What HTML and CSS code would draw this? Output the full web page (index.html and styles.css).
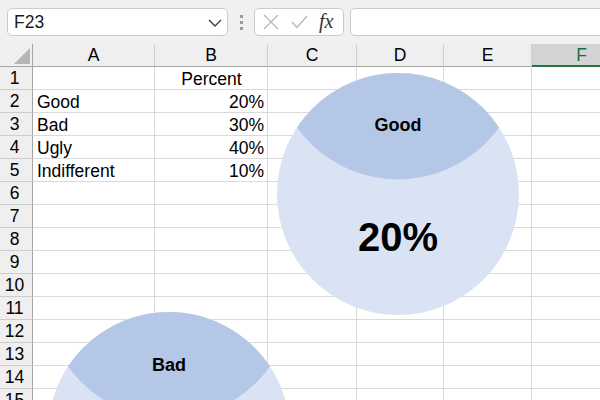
FILE: index.html
```html
<!DOCTYPE html>
<html>
<head>
<meta charset="utf-8">
<link rel="stylesheet" href="styles.css">
</head>
<body>
<div class="app">
  <div class="toolbar">
    <div class="namebox">
      <span class="ref">F23</span>
      <svg class="chev" width="14" height="8" viewBox="0 0 14 8"><polyline points="1,1 7,7 13,1" fill="none" stroke="#3c3c3c" stroke-width="1.4"/></svg>
    </div>
    <div class="grip"><span></span><span></span><span></span></div>
    <div class="fbtns">
      <svg width="16" height="16" viewBox="0 0 16 16"><path d="M1 1 L15 15 M15 1 L1 15" stroke="#b8b8b8" stroke-width="1.3" fill="none"/></svg>
      <svg width="17" height="14" viewBox="0 0 17 14"><polyline points="1,7 6,12.5 16,1" fill="none" stroke="#b8b8b8" stroke-width="1.3"/></svg>
      <span class="fx">fx</span>
    </div>
    <div class="formula"></div>
  </div>
  <div class="sheet">
    <div class="grid">
      <div class="corner"><span class="tri"></span></div>
      <div class="ch">A</div><div class="ch">B</div><div class="ch">C</div><div class="ch">D</div><div class="ch">E</div><div class="ch sel">F</div>

      <div class="rh">1</div><div class="c"></div><div class="c ctr">Percent</div><div class="c"></div><div class="c"></div><div class="c"></div><div class="c"></div>
      <div class="rh">2</div><div class="c">Good</div><div class="c num">20%</div><div class="c"></div><div class="c"></div><div class="c"></div><div class="c"></div>
      <div class="rh">3</div><div class="c">Bad</div><div class="c num">30%</div><div class="c"></div><div class="c"></div><div class="c"></div><div class="c"></div>
      <div class="rh">4</div><div class="c">Ugly</div><div class="c num">40%</div><div class="c"></div><div class="c"></div><div class="c"></div><div class="c"></div>
      <div class="rh">5</div><div class="c">Indifferent</div><div class="c num">10%</div><div class="c"></div><div class="c"></div><div class="c"></div><div class="c"></div>
      <div class="rh">6</div><div class="c"></div><div class="c"></div><div class="c"></div><div class="c"></div><div class="c"></div><div class="c"></div>
      <div class="rh">7</div><div class="c"></div><div class="c"></div><div class="c"></div><div class="c"></div><div class="c"></div><div class="c"></div>
      <div class="rh">8</div><div class="c"></div><div class="c"></div><div class="c"></div><div class="c"></div><div class="c"></div><div class="c"></div>
      <div class="rh">9</div><div class="c"></div><div class="c"></div><div class="c"></div><div class="c"></div><div class="c"></div><div class="c"></div>
      <div class="rh">10</div><div class="c"></div><div class="c"></div><div class="c"></div><div class="c"></div><div class="c"></div><div class="c"></div>
      <div class="rh">11</div><div class="c"></div><div class="c"></div><div class="c"></div><div class="c"></div><div class="c"></div><div class="c"></div>
      <div class="rh">12</div><div class="c"></div><div class="c"></div><div class="c"></div><div class="c"></div><div class="c"></div><div class="c"></div>
      <div class="rh">13</div><div class="c"></div><div class="c"></div><div class="c"></div><div class="c"></div><div class="c"></div><div class="c"></div>
      <div class="rh">14</div><div class="c"></div><div class="c"></div><div class="c"></div><div class="c"></div><div class="c"></div><div class="c"></div>
      <div class="rh">15</div><div class="c"></div><div class="c"></div><div class="c"></div><div class="c"></div><div class="c"></div><div class="c"></div>
    </div>

    <svg class="chart chart-good" width="244" height="244" viewBox="0 0 244 244">
      <defs><clipPath id="capGood"><circle cx="122" cy="-16.5" r="124"/></clipPath></defs>
      <circle cx="122" cy="122" r="121" fill="#dae3f3"/>
      <circle cx="122" cy="122" r="121" fill="#b4c7e7" clip-path="url(#capGood)"/>
      <text class="lbl" x="122" y="59">Good</text>
      <text class="pct" x="122" y="178.5">20%</text>
    </svg>

    <svg class="chart chart-bad" width="244" height="134" viewBox="0 0 244 134">
      <defs><clipPath id="capBad"><circle cx="122" cy="-16.5" r="124"/></clipPath></defs>
      <circle cx="122" cy="122" r="121" fill="#dae3f3"/>
      <circle cx="122" cy="122" r="121" fill="#b4c7e7" clip-path="url(#capBad)"/>
      <text class="lbl" x="122" y="60">Bad</text>
    </svg>
  </div>
</div>
</body>
</html>
```

FILE: styles.css
```css
html, body {
  margin: 0;
  padding: 0;
  width: 600px;
  height: 400px;
  overflow: hidden;
  background: #ffffff;
  font-family: "Liberation Sans", Arial, sans-serif;
  color: #000;
}

.app {
  width: 600px;
  height: 400px;
  overflow: hidden;
  background: #f0f0f0;
}

.toolbar {
  height: 44px;
  display: flex;
  align-items: flex-start;
  padding-top: 8px;
  box-sizing: border-box;
  background: #f0f0f0;
}

.toolbar > * {
  flex-shrink: 0;
}

.namebox {
  margin-left: 7px;
  width: 221px;
  height: 28px;
  box-sizing: border-box;
  background: #fff;
  border: 1px solid #cbcbcb;
  border-radius: 5px;
  display: flex;
  align-items: center;
  justify-content: space-between;
  padding: 0 5px 0 6px;
}

.ref {
  font-size: 17.5px;
  color: #1a1a1a;
}

.chev {
  display: block;
  margin-top: 2px;
}

.grip {
  width: 26px;
  height: 28px;
  display: flex;
  flex-direction: column;
  align-items: center;
  justify-content: center;
  gap: 3px;
}

.grip span {
  width: 3px;
  height: 3px;
  background: #9a9a9a;
}

.fbtns {
  width: 90px;
  height: 28px;
  box-sizing: border-box;
  background: #fff;
  border: 1px solid #cbcbcb;
  border-radius: 5px;
  display: flex;
  align-items: center;
  padding: 0 5px 0 8px;
  gap: 12px;
}

.fbtns svg {
  display: block;
}

.fx {
  font-family: "Liberation Serif", "Times New Roman", serif;
  font-style: italic;
  font-size: 20px;
  color: #333;
  margin-left: -1px;
  line-height: 1;
  margin-bottom: 2px;
}

.formula {
  margin-left: 6px;
  width: 270px;
  height: 28px;
  box-sizing: border-box;
  background: #fff;
  border: 1px solid #cbcbcb;
  border-radius: 5px;
}

.sheet {
  position: relative;
  height: 356px;
  overflow: hidden;
  background: #fff;
}

.grid {
  display: grid;
  grid-template-columns: 33px 122px 113px 89px 87px 88px 100px;
  grid-auto-rows: 23px;
  width: 632px;
}

.corner,
.ch,
.rh,
.c {
  box-sizing: border-box;
}

.corner {
  background: #efefef;
  border-right: 1px solid #a6a6a6;
  border-bottom: 1px solid #a6a6a6;
  position: relative;
}

.tri {
  position: absolute;
  right: 2px;
  bottom: 2px;
  width: 0;
  height: 0;
  border-left: 16px solid transparent;
  border-bottom: 16px solid #b5b5b5;
}

.ch {
  background: #efefef;
  border-right: 1px solid #cdcdcd;
  border-bottom: 1px solid #a6a6a6;
  font-size: 17.5px;
  line-height: 23px;
  text-align: center;
  color: #000;
}

.ch.sel {
  background: #d3d3d3;
  border-bottom: 2px solid #217346;
  color: #1e6b40;
}

.rh {
  background: #efefef;
  border-right: 1px solid #a6a6a6;
  border-bottom: 1px solid #cdcdcd;
  font-size: 17.5px;
  line-height: 23px;
  text-align: center;
  padding-right: 3px;
}

.c {
  border-right: 1px solid #dadada;
  border-bottom: 1px solid #dadada;
  font-size: 17.5px;
  line-height: 23px;
  padding: 1px 3px 0 4px;
  white-space: nowrap;
  overflow: visible;
}

.c.ctr {
  text-align: center;
}

.c.num {
  text-align: right;
}

.chart {
  position: absolute;
  display: block;
}

.chart-good {
  left: 276px;
  top: 28px;
}

.chart-bad {
  left: 47px;
  top: 267px;
}

.lbl {
  font-family: "Liberation Sans", Arial, sans-serif;
  font-weight: bold;
  font-size: 18px;
  text-anchor: middle;
  fill: #000;
}

.pct {
  font-family: "Liberation Sans", Arial, sans-serif;
  font-weight: bold;
  font-size: 40px;
  text-anchor: middle;
  fill: #000;
}
```
